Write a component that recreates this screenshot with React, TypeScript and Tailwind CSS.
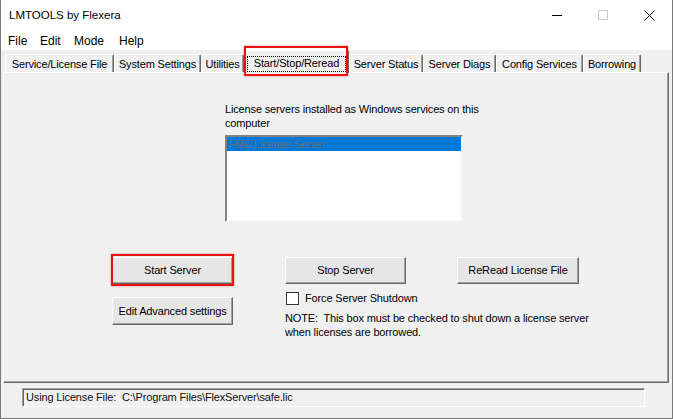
const tabs = [
  { label: "Service/License File", w: "w-[109px]" },
  { label: "System Settings", w: "w-[87px]" },
  { label: "Utilities", w: "w-[43px]" },
  { label: "Start/Stop/Reread", w: "w-[105px]", active: true },
  { label: "Server Status", w: "w-[74px]" },
  { label: "Server Diags", w: "w-[73px]" },
  { label: "Config Services", w: "w-[87px]" },
  { label: "Borrowing", w: "w-[58px]" },
];

const menu = [
  { label: "File", w: "w-[32px]" },
  { label: "Edit", w: "w-[34px]" },
  { label: "Mode", w: "w-[45px]" },
  { label: "Help", w: "w-[40px]" },
];

function Button({ label, className = "" }: { label: string; className?: string }) {
  return (
    <div
      className={`flex items-center justify-center bg-[#e6e6e6] border border-t-white border-l-white border-r-[#696969] border-b-[#696969] shadow-[inset_-1px_-1px_0_#a0a0a0] ${className}`}
    >
      {label}
    </div>
  );
}

export default function App() {
  return (
    <div
      className="w-[673px] h-[419px] flex flex-col bg-white border-x border-b border-[#7a7a7a] text-black overflow-hidden"
      style={{ fontFamily: '"Liberation Sans", Arial, sans-serif' }}
    >
      {/* title bar */}
      <div className="h-[30px] flex items-center bg-white shrink-0">
        <span className="ml-[8px] mt-[1px] text-[11.5px]">LMTOOLS by Flexera</span>
        <div className="ml-auto flex h-full">
          <div className="w-[46px] h-full flex items-center justify-center">
            <div className="w-[10px] h-px bg-black" />
          </div>
          <div className="w-[46px] h-full flex items-center justify-center">
            <div className="w-[10px] h-[10px] border border-[#cccccc]" />
          </div>
          <div className="w-[46px] h-full flex items-center justify-center">
            <svg width="11" height="11" viewBox="0 0 11 11">
              <path d="M0.5 0.5 L10.5 10.5 M10.5 0.5 L0.5 10.5" stroke="#000" strokeWidth="1" />
            </svg>
          </div>
        </div>
      </div>

      {/* menu */}
      <div className="h-[20px] flex items-center bg-white shrink-0 text-[12px] pl-[7px] pt-[1px]">
        {menu.map((m) => (
          <span key={m.label} className={m.w}>
            {m.label}
          </span>
        ))}
      </div>

      {/* body */}
      <div className="flex-1 bg-[#f0f0f0] flex flex-col text-[11px] tracking-[-0.15px]">
        <div className="h-[22px] flex items-end pl-[4px] shrink-0">
          {tabs.map((t) =>
            t.active ? (
              <div
                key={t.label}
                className={`${t.w} relative z-10 h-[23px] -mb-px bg-[#f0f0f0] border-t border-l border-white border-r border-r-[#696969] rounded-t-[2px] shadow-[inset_-1px_0_0_#a0a0a0] flex items-center justify-center`}
              >
                <div className="absolute left-[2px] right-[2px] top-[5px] bottom-[1px] border border-dotted border-black" />
                <span className="relative mt-[3px]">{t.label}</span>
                <div className="absolute -left-[1px] right-0 -top-[5px] -bottom-[3px] border-2 border-[#ee1111] shadow-[0_0_2px_rgba(238,17,17,0.5)]" />
              </div>
            ) : (
              <div
                key={t.label}
                className={`${t.w} h-[18px] pt-[2px] bg-[#f0f0f0] border-t border-l border-white border-r border-r-[#696969] rounded-t-[2px] shadow-[inset_-1px_0_0_#a0a0a0] flex items-center justify-center`}
              >
                {t.label}
              </div>
            )
          )}
        </div>

        {/* tab panel */}
        <div className="ml-[2px] w-[666px] h-[311px] shrink-0 border border-t-white border-l-white border-r-[#696969] border-b-[#696969] shadow-[inset_-1px_-1px_0_#a0a0a0] flex flex-col">
          <div className="ml-[221px] mt-[29px] w-[262px] leading-[14px]">
            License servers installed as Windows services on this computer
          </div>
          <div className="ml-[221px] mt-[5px] w-[238px] h-[87px] bg-white border-2 border-t-[#828282] border-l-[#828282] border-r-[#f4f4f4] border-b-[#f4f4f4]">
            <div className="h-[14px] bg-[#0078d7] text-[#6d6d6d] leading-[14px] pl-[1px]">
              FME License Server
            </div>
          </div>

          <div className="flex mt-[35px]">
            <div className="ml-[108px] w-[121px] flex flex-col">
              <div className="relative">
                <Button label="Start Server" className="h-[27px]" />
                <div className="absolute -left-[1px] -right-[1px] -top-[3px] -bottom-[2px] border-2 border-[#ee1111] shadow-[0_0_2px_rgba(238,17,17,0.5)]" />
              </div>
              <Button label="Edit Advanced settings" className="h-[28px] mt-[13px]" />
            </div>

            <div className="ml-[52px] w-[121px] flex flex-col">
              <Button label="Stop Server" className="h-[27px]" />
              <div className="mt-[8px] flex items-center h-[13px] whitespace-nowrap">
                <div className="ml-[1px] w-[13px] h-[13px] bg-white border border-[#333333] shrink-0" />
                <span className="ml-[6px]">Force Server Shutdown</span>
              </div>
              <div className="mt-[6px] leading-[14px] whitespace-nowrap">
                <div>NOTE:&nbsp; This box must be checked to shut down a license server</div>
                <div>when licenses are borrowed.</div>
              </div>
            </div>

            <div className="ml-[51px] w-[122px]">
              <Button label="ReRead License File" className="h-[27px]" />
            </div>
          </div>
        </div>

        {/* status */}
        <div className="ml-[21px] mt-[5px] w-[623px] h-[19px] shrink-0 border border-t-[#a0a0a0] border-l-[#a0a0a0] border-r-white border-b-white shadow-[inset_1px_1px_0_#696969] flex items-center pl-[3px] text-[#111]">
          Using License File:&nbsp; C:\Program Files\FlexServer\safe.lic
        </div>
      </div>
    </div>
  );
}
